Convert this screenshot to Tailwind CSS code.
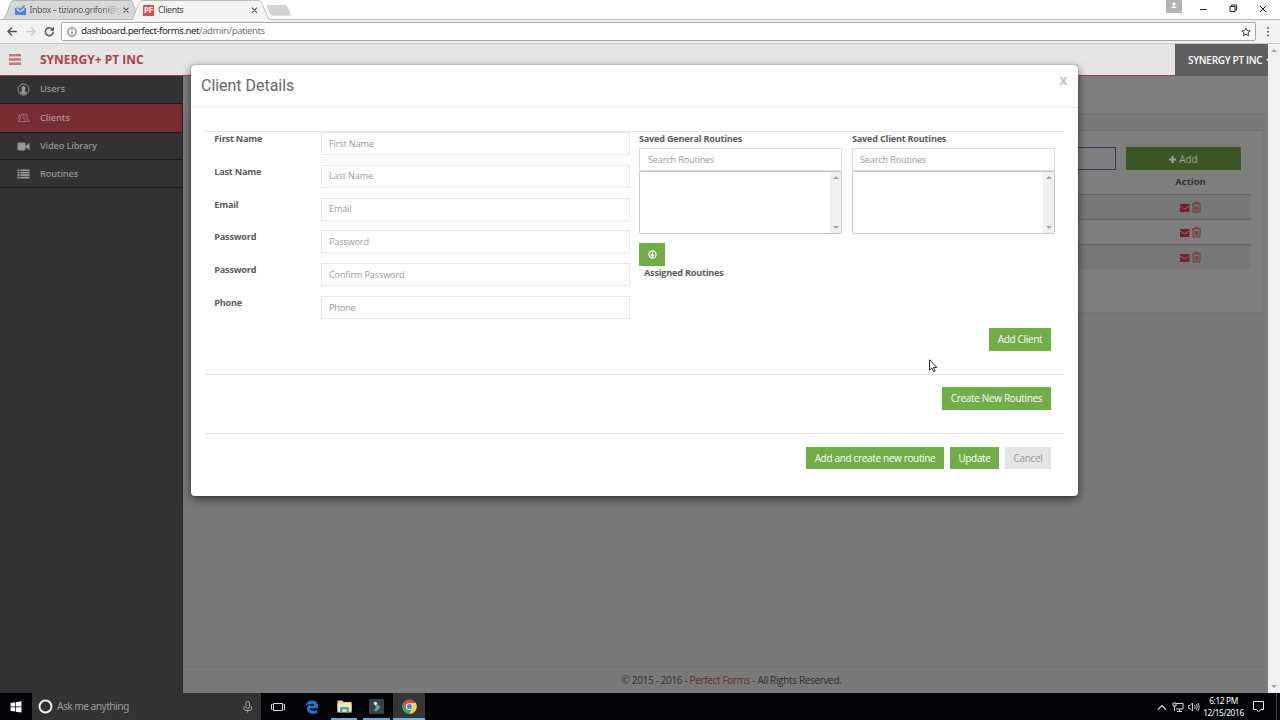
<!DOCTYPE html>
<html lang="en">
<head>
<meta charset="utf-8">
<title>Clients</title>
<script src="https://cdn.jsdelivr.net/npm/@tailwindcss/browser@4"></script>
</head>
<body class="w-[1280px] h-[720px] overflow-hidden bg-white font-['Open_Sans',sans-serif]">
<div class="relative flex h-[720px] w-[1280px] flex-col overflow-hidden">

  <!-- Tab strip -->
  <div class="relative flex h-5 shrink-0 bg-white font-['Noto_Sans',sans-serif] text-[8.700px] leading-5 tracking-[-0.3px]">
    <svg class="absolute inset-0" width="1280" height="20" fill="none">
      <path d="M4 19.500 11 2.500q.8-2 3-2h116q2 0 2.800 2L138 19.500z" fill="#d8d8d8" stroke="#b2b2b2"/>
      <path d="M267 5.500h18q1.500 0 2 1.200l3.500 8.500h-18q-1.500 0-2-1.200z" fill="#d3d3d3" stroke="#d0d0d0"/>
      <path d="M0 19.500h132L139.500 2.500q.8-2 3-2h116q2 0 2.800 2l7.700 17H1280" stroke="#b9b9b9"/>
      <path d="M132.500 20 140 2.800q.8-1.800 2.500-1.800h116q1.700 0 2.500 1.800l7.500 17.200z" fill="#f2f2f2"/>
      <path d="m123.500 7.700 5 5m0-5-5 5M252 7.700l5 5m0-5-5 5" stroke="#4d4d4d" stroke-width="1.100"/>
    </svg>
    <div class="relative flex w-[120px] items-center pl-[15px]">
      <svg class="shrink-0" width="11" height="12" viewBox="0 0 11 12"><path d="M0 4.500 2 3v5H0zM11 4.500 9 3v5h2z" fill="#2f6fd0"/><path d="M1.500 1.500h8v6l-4 2.500-4-2.500z" fill="#b9d0f3"/><path d="m3.500 4 2 2L9.500 1.500" fill="none" stroke="#4a6fb5" stroke-width="1.200"/><path d="m0 5 5.500 3.500L11 5v6H0z" fill="#4585e4"/></svg>
      <span class="ml-[3.500px] whitespace-nowrap bg-linear-to-r from-[#505050] from-75% to-[#c8c8c8] bg-clip-text tracking-[-0.4px] text-transparent">Inbox – tiziano.grifoni@g</span>
    </div>
    <div class="relative flex items-center pl-[23px]">
      <span class="flex h-[11px] w-[11px] items-center justify-center bg-[#e14b50] text-[8px] font-bold leading-none text-white">PF</span>
      <span class="ml-1 text-[#444]">Clients</span>
    </div>
    <div class="relative ml-auto flex">
      <div class="flex h-[13px] w-4 justify-center bg-[#b3b3b3]"><svg width="10" height="10" viewBox="0 0 10 10" fill="#fff"><circle cx="5" cy="4" r="1.600"/><path d="M2.500 8V7.200Q5 5.200 7.500 7.200V8z"/></svg></div>
      <svg class="ml-[18px]" width="80" height="20" fill="none" stroke="#222"><path d="M-.5 9.500h7M30 6.500h5v5h-5zM31.500 6.500v-1.500h5v5h-1.500M60 6l6 6m0-6-6 6"/></svg>
    </div>
  </div>

  <!-- Toolbar -->
  <div class="flex h-6 shrink-0 items-center border-b border-[#c4c4c4] bg-[#f2f2f2]">
    <svg class="shrink-0" width="61" height="23" fill="none" stroke-width="1.500"><path d="M17 11.500H8m4-4-4 4 4 4" stroke="#555"/><path d="M26.500 11.500H35m-4-4 4 4-4 4" stroke="#cdcdcd"/><path d="M52.500 9.100a4 4 0 1 0 .9 2.700" stroke="#555"/><path d="M54 6.800v4h-4z" fill="#555"/></svg>
    <div class="flex h-[19px] w-[1195px] items-center rounded-[2px] border border-[#a6a6a6] bg-white pl-[5px] font-['Noto_Sans',sans-serif] text-[9.700px] tracking-[-0.5px]">
      <svg width="10" height="10" viewBox="0 0 10 10" fill="none" stroke="#555"><circle cx="5" cy="5" r="4.200"/><path d="M5 4.500v3M5 2.400v1.100"/></svg>
      <span class="ml-[4px] whitespace-nowrap text-[#777]"><span class="text-[#222]">dashboard.perfect-forms.net</span>/admin/patients</span>
      <svg class="ml-auto mr-[4px]" width="10" height="10" viewBox="0 0 10 10" fill="none" stroke="#444"><path d="m5 .9 1.200 2.700 3 .3-2.300 2 .7 2.900L5 7.300 2.400 8.800l.7-2.900-2.300-2 3-.3z"/></svg>
    </div>
    <svg class="ml-auto mr-[9px]" width="6" height="12" fill="#555"><circle cx="3" cy="2" r="1"/><circle cx="3" cy="5.800" r="1"/><circle cx="3" cy="9.600" r="1"/></svg>
  </div>

  <!-- Page -->
  <div class="relative flex h-[649px] shrink-0">
    <div class="flex w-[1268px] flex-col overflow-hidden">
      <header class="flex h-8 shrink-0 items-stretch bg-[#e5e5e5]">
        <div class="flex flex-1 items-center border-b border-[#a23c40] pl-[9px]">
          <svg width="12" height="11" fill="#c4767a"><path d="M0 0h12.500v2.500H0zM0 4.200h12.500v2.500H0zM0 8.500h12.500V11H0z"/></svg>
          <span class="ml-[19px] text-[12px] font-bold text-[#aa4246]">SYNERGY+ PT INC</span>
        </div>
        <div class="flex w-[93px] items-center whitespace-nowrap bg-[#5e5e5e] pl-[13px] text-[10px] font-semibold tracking-[-0.3px] text-white"><span>SYNERGY PT INC</span><span class="ml-[4px] h-0 w-0 shrink-0 border-x-3 border-t-3 border-x-transparent border-t-white"></span></div>
      </header>
      <div class="flex flex-1">
        <nav class="flex w-[183px] flex-col border-r border-[#262626] bg-[#323232] text-[9.300px] font-semibold tracking-[-0.1px] text-[#929292]">
          <div class="flex h-7 items-center border-b border-[#1c1c1c] pl-[17px]">
            <svg width="13" height="13" viewBox="0 0 13 13"><circle cx="6.500" cy="6.500" r="5.500" fill="none" stroke="#999"/><path d="M4.500 5.300a2 2.400 0 0 1 4 0Q8.500 7 7.600 8q2 .5 2.400 1.700-3.500 2.800-7 0Q3.400 8.500 5.400 8 4.500 7 4.500 5.300" fill="#999"/></svg>
            <span class="mb-px ml-[10px]">Users</span></div>
          <div class="flex h-[29px] items-center border-b border-[#1c1c1c] bg-[#782c31] pl-[17px] text-[#b09294]">
            <svg width="13" height="10" viewBox="0 0 13 10" fill="none" stroke="#a77a7d" stroke-width=".9"><path d="M4.500 1.500q1.700-1 2.400.5t-.6 3.200q2.200.7 2.400 3.300H1.300q0-2.300 2.400-3Q2.500 3 4.500 1.500M7.500 1q2.500-.7 2.700 1.500 0 1.700-.9 2.600 2.500.8 2.900 3.400H9.500M3 1.200Q1 2 2 4.300L.5 5.500"/></svg>
            <span class="ml-[10px]">Clients</span></div>
          <div class="flex h-[27px] items-center border-b border-[#1c1c1c] pl-[17px] tracking-[-0.2px]">
            <svg width="13" height="9" viewBox="0 0 13 9" fill="#999"><rect x=".5" y=".5" width="8" height="8" rx="1.500"/><path d="M8 4.500 12.500.8v7.400z"/></svg>
            <span class="ml-[10px]">Video Library</span></div>
          <div class="flex h-7 items-center border-b border-[#1c1c1c] pl-[17px]">
            <svg width="13" height="10" viewBox="0 0 13 10" fill="#999"><path d="M.5 .5h2v1.700h-2zM3.300 .5h9.200v1.700H3.300zM.5 2.900h2v1.700h-2zM3.300 2.900h9.200v1.700H3.300zM.5 5.300h2V7h-2zM3.300 5.300h9.200V7H3.300zM.5 7.700h2v1.700h-2zM3.300 7.700h9.200v1.700H3.300z"/></svg>
            <span class="ml-[10px] tracking-[-0.2px]">Routines</span></div>
        </nav>
        <main class="flex flex-1 flex-col bg-[#797979]">
          <div class="h-[38px] border-b border-[#757575] bg-[#7f7f7f]"></div>
          <section class="ml-[10px] mr-[5px] mt-[16px] h-[183px] border border-[#747474] border-t-[#6c6c6c] bg-[#7e7e7e] pt-[16px]">
            <div class="flex justify-end gap-[10px] pr-[21px]">
              <div class="h-[23px] w-[300px] border border-[#2a3a57]"></div>
              <div class="flex h-[23px] w-[115px] items-center justify-center gap-[3px] bg-[#395823] pt-px text-[10px] tracking-[-0.1px] text-[#a0a0a0]"><svg width="7" height="7" fill="#a0a0a0"><path d="M2.500 0h2.200v2.400H7v2.200H4.700V7H2.500V4.600H0V2.400h2.500z"/></svg>Add</div>
            </div>
            <div class="ml-auto mr-[11px] flex w-[820px] flex-col text-[#333]">
              <div class="flex h-[25px] items-center justify-end border-b border-[#656565] pt-px"><b class="w-[121px] text-center text-[9.500px]">Action</b></div>
              <div class="flex h-[25px] items-center justify-end border-b border-[#656565] bg-[#777] pr-[49px]"><svg width="22" height="12" viewBox="0 0 22 12"><use href="#acts"/></svg></div>
              <div class="flex h-[25px] items-center justify-end border-b border-[#656565] pr-[49px]"><svg width="22" height="12" viewBox="0 0 22 12"><use href="#acts"/></svg></div>
              <div class="flex h-[24px] items-center justify-end bg-[#777] pr-[49px]"><svg width="22" height="12" viewBox="0 0 22 12"><g id="acts"><path d="M0 3h9.500v1.500L4.700 7.500 0 4.500zM0 5.500l4.700 3 4.800-3V11H0z" fill="#741f25"/><path d="M12.200 2.800h8.600M15 2.800V1.300h3v1.500M13 3v8h7V3M15 5v4.500M16.500 5v4.500M18 5v4.500" fill="none" stroke="#792d32" stroke-width=".9"/></g></svg></div>
            </div>
          </section>
          <footer class="mt-auto flex h-[27px] items-center justify-center border-t border-[#737373] pl-[12px] pt-px text-[10px] tracking-[-0.34px] text-[#2e2e2e]"><span>© 2015 - 2016 - <span class="text-[#6c282c]">Perfect Forms</span> - All Rights Reserved.</span></footer>
        </main>
      </div>
    </div>
    <!-- Page scrollbar -->
    <div class="flex w-3 flex-col items-center justify-between bg-[#f1f1f1] py-[5px]">
      <span class="border-x-3 border-b-3 border-x-transparent border-b-[#a3a3a3]"></span>
      <span class="border-x-3 border-t-3 border-x-transparent border-t-[#a3a3a3]"></span>
    </div>

    <!-- Client dialog -->
    <div class="absolute left-[191px] top-[21px] flex h-[431px] w-[887px] flex-col rounded-[4px] bg-white text-[9.100px] tracking-[-0.14px] text-[#999] shadow-[0_3px_10px_rgba(0,0,0,0.6),0_0_1px_rgba(0,0,0,0.8)]">
      <div class="flex h-[43px] shrink-0 items-center justify-between border-b border-[#e7e7e7] pl-[10px] pr-[11px]">
        <h4 class="font-['Roboto',sans-serif] text-[16px] tracking-[-0.03px] text-[#666]">Client Details</h4>
        <span class="mb-[9px] text-[11px] font-bold text-[#bbb]">X</span>
      </div>
      <div class="ml-[13px] mr-[14px] mt-[23px] flex h-[243px] shrink-0 border-t border-[#e5e5e5] pl-[10px]">
        <div class="flex w-[416px] flex-col gap-[9.800px]">
          <div class="flex h-[23px]"><b class="w-[106.500px] pl-[.3px] tracking-[-0.2px] text-[#5a5a5a]">First Name</b><div class="flex w-[309px] items-center border border-[#e6e6e6] pl-[7.500px]">First Name</div></div>
          <div class="flex h-[23px]"><b class="w-[106.500px] pl-[.3px] tracking-[-0.2px] text-[#5a5a5a]">Last Name</b><div class="flex w-[309px] items-center border border-[#e6e6e6] pl-[7.500px]">Last Name</div></div>
          <div class="flex h-[23px]"><b class="w-[106.500px] pl-[.3px] tracking-[-0.2px] text-[#5a5a5a]">Email</b><div class="flex w-[309px] items-center border border-[#e6e6e6] pl-[7.500px]">Email</div></div>
          <div class="flex h-[23px]"><b class="w-[106.500px] pl-[.3px] tracking-[-0.2px] text-[#5a5a5a]">Password</b><div class="flex w-[309px] items-center border border-[#e6e6e6] pl-[7.500px]">Password</div></div>
          <div class="flex h-[23px]"><b class="w-[106.500px] pl-[.3px] tracking-[-0.2px] text-[#5a5a5a]">Password</b><div class="flex w-[309px] items-center border border-[#e6e6e6] pl-[7.500px]">Confirm Password</div></div>
          <div class="flex h-[23px]"><b class="w-[106.500px] pl-[.3px] tracking-[-0.2px] text-[#5a5a5a]">Phone</b><div class="flex w-[309px] items-center border border-[#e6e6e6] pl-[7.500px]">Phone</div></div>
        </div>
        <div class="ml-[9px] flex w-[416px] flex-col">
          <div class="flex gap-[10px]">
            <div class="w-[203px]">
              <b class="flex h-4 leading-[14px] tracking-[-0.2px] text-[#5a5a5a]">Saved General Routines</b>
              <div class="flex h-[23px] items-center border border-[#ddd] pl-2">Search Routines</div>
              <div class="flex h-[63px] justify-end rounded-[2px] border border-[#c4c4c4]"><div class="flex w-[11px] flex-col items-center justify-between bg-[#f0f0f0] py-1"><span class="border-x-3 border-b-3 border-x-transparent border-b-[#a3a3a3]"></span><span class="border-x-3 border-t-3 border-x-transparent border-t-[#a3a3a3]"></span></div></div>
            </div>
            <div class="w-[203px]">
              <b class="flex h-4 leading-[14px] tracking-[-0.2px] text-[#5a5a5a]">Saved Client Routines</b>
              <div class="flex h-[23px] items-center border border-[#ddd] pl-[7px]">Search Routines</div>
              <div class="flex h-[63px] justify-end rounded-[2px] border border-[#c4c4c4]"><div class="flex w-[11px] flex-col items-center justify-between bg-[#f0f0f0] py-1"><span class="border-x-3 border-b-3 border-x-transparent border-b-[#a3a3a3]"></span><span class="border-x-3 border-t-3 border-x-transparent border-t-[#a3a3a3]"></span></div></div>
            </div>
          </div>
          <div class="mt-[9px] flex h-[23px] w-[26px] items-center justify-center bg-[#70ad47]"><svg width="9" height="9" viewBox="0 0 9 9" fill="none" stroke="#fff"><circle cx="4.500" cy="4.500" r="3.600" stroke-width="1.200"/><path d="M4.500 2.200v4M2.800 4.500l1.700 1.800 1.700-1.800" stroke-width="1.200"/></svg></div>
          <b class="ml-[5px] tracking-[-0.2px] text-[#5a5a5a]">Assigned Routines</b>
          <div class="mr-1 mt-auto mb-[23px] flex h-[23px] w-[62px] items-center justify-center self-end bg-[#70ad47] text-[10px] font-medium tracking-[-0.34px] text-white">Add Client</div>
        </div>
      </div>
      <div class="ml-[13px] mr-[14px] flex h-[59px] shrink-0 justify-end border-t border-[#e0e0e0] pr-[13px] pt-3 text-[10px] font-medium tracking-[-0.34px]">
        <div class="flex h-[23px] w-[109px] items-center justify-center bg-[#70ad47] text-white">Create New Routines</div>
      </div>
      <div class="ml-[13px] mr-[14px] flex shrink-0 justify-end gap-[6px] border-t border-[#e0e0e0] pr-[13px] pt-[13px] text-[10px] font-medium tracking-[-0.34px]">
        <div class="flex h-[22px] w-[138px] items-center justify-center bg-[#70ad47] text-white">Add and create new routine</div>
        <div class="flex h-[22px] w-[49px] items-center justify-center bg-[#70ad47] text-white">Update</div>
        <div class="flex h-[22px] w-[46px] items-center justify-center bg-[#e4e4e4] font-normal text-[#999]">Cancel</div>
      </div>
    </div>

    <!-- Pointer -->
    <svg class="absolute left-[929px] top-[315px]" width="9" height="14" viewBox="0 0 9 14"><path d="M.5.700v10.500l2.400-2.200 1.700 3.600 1.600-.8-1.600-3.400h3.200z" fill="#fff" stroke="#111" stroke-width=".9"/></svg>
  </div>

  <!-- Taskbar -->
  <div class="flex h-[27px] shrink-0 items-stretch bg-[#020407] font-['Noto_Sans',sans-serif]">
    <div class="flex w-8 items-center justify-center"><svg width="12" height="12" fill="#fff"><path d="M.5 2 5 1.300v4.200H.5zM5.700 1.200 11.500.300v5.200H5.700zM.5 6.200H5v4.200L.5 9.800zM5.700 6.200h5.800v5.300l-5.800-.8z"/></svg></div>
    <div class="flex w-[229px] items-center bg-[#333] pl-[6px]">
      <svg width="15" height="15"><circle cx="7.500" cy="7.500" r="6" fill="none" stroke="#f4f4f4" stroke-width="1.900"/></svg>
      <span class="ml-[4px] text-[10.300px] tracking-[-0.6px] text-[#9c9c9c]">Ask me anything</span>
      <svg class="ml-auto mr-[9px]" width="9" height="12" fill="none" stroke="#aaa"><rect x="3" y=".5" width="3.500" height="7" rx="1.700"/><path d="M1 5.500v2q0 2 2 2h3.500q2 0 2-2v-2M4.700 9.500v2"/></svg>
    </div>
    <div class="flex w-[33px] items-center justify-center"><svg width="14" height="10" fill="none" stroke="#ddd"><path d="M2.500 1.500h9v7h-9zM1.500 2.500h-1v5h1M12.500 2.500h1v5h-1"/></svg></div>
    <div class="flex w-[34px] items-center justify-center pl-px"><svg width="14" height="14" viewBox="0 0 14 14"><path d="M.5 6.200Q1.300.5 7 .5q6 .2 6 6.200v1.600H4.700q.4 2.700 3.600 2.700 2.300 0 4-1v2.700q-2 1-4.600 1Q2 13.500 2 8.500 2.200 5.500 5.200 4 2 4 .5 6.200M4.800 5.700h4.500q0-2.200-2.100-2.200T4.800 5.700" fill="#1580d8"/></svg></div>
    <div class="flex w-8 flex-col items-center"><svg class="mt-[7px]" width="15" height="13"><path d="M.5.500h5l1 1.500h8v10.500H.5z" fill="#f0d477"/><path d="M.5 3.500h14V11H.5z" fill="#fbe8a0"/><path d="M3 12.500V8q0-1 1-1h7q1 0 1 1v4.500H9.500v-3h-4v3z" fill="#43a8cf"/></svg><span class="mt-auto h-[2px] w-[26px] bg-[#6fa9d6]"></span></div>
    <div class="flex w-[33px] flex-col items-center"><svg class="mt-[6px]" width="15" height="15"><rect width="15" height="15" rx="1.500" fill="#35414c"/><path d="m7 4.500 4.500 3.500L7 12.500l-2-1.500 3-3-2-1.500z" fill="#5eb3ad"/><path d="m6.500 2.500 2 2-2 2-2-2z" fill="#fff"/></svg><span class="mt-auto h-[2px] w-[27px] bg-[#6fa9d6]"></span></div>
    <div class="flex w-[32px] flex-col items-center bg-[#333537]"><svg class="mt-[6px]" width="15" height="15" viewBox="0 0 15 15"><path d="M7.500 7.500V14.800A7.300 7.300 0 0 0 13.800 3.800H7.500z" fill="#fbcf3b"/><path d="M7.500 7.500 1.200 3.800A7.300 7.300 0 0 0 7.500 14.800l3-5.500z" fill="#3fa757"/><path d="M7.500 3.800h6.300A7.300 7.300 0 0 0 1.200 3.800l3 5z" fill="#e04a3c"/><circle cx="7.500" cy="7.500" r="3.500" fill="#f4f4f4"/><circle cx="7.500" cy="7.500" r="2.600" fill="#4486ee"/></svg><span class="mt-auto h-[2px] w-full bg-[#76b3e0]"></span></div>
    <div class="ml-auto flex items-center text-white">
      <svg width="44" height="14" fill="none" stroke="#ddd"><path d="m1 9.500 4-4 4 4" stroke-width="1.200"/><path d="M18.500 3.500h7.500v5.500h-7M22.500 9v2.500M20 11.500h5M16 3v3h3V3zM17.500 6v5"/><path d="M31.500 5.500H33l2.500-2.500v8L33 8.500h-1.500zM37.500 5q1.300 2 0 4M39.300 4q2 3 0 6M41 3q2.500 4 0 8" stroke-width=".9"/></svg>
      <div class="ml-[1px] flex w-[43px] flex-col items-center text-[8.300px] leading-[12px] tracking-[-0.35px]"><span>6:12 PM</span><span>12/15/2016</span></div>
      <svg class="ml-[8px] mr-[11px]" width="12" height="13" fill="none" stroke="#eee"><path d="M.5 1.500h10v8H8l-2.500 2.300L3.500 9.500h-3z"/></svg>
      <span class="mr-[3px] h-[27px] w-px bg-[#444]"></span>
    </div>
  </div>
</div>
</body>
</html>
